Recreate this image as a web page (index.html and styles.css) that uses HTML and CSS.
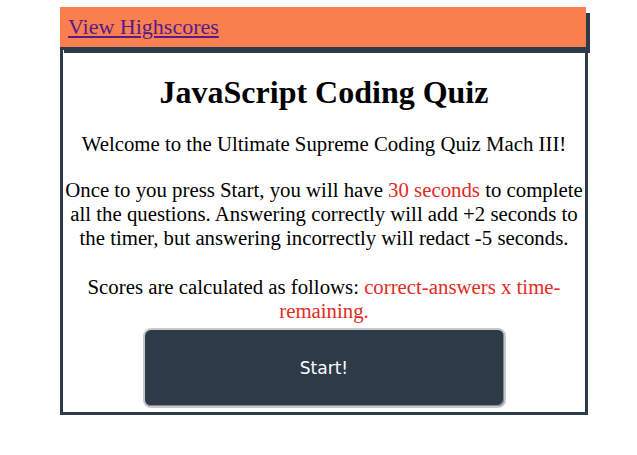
FILE: index.html
```html
<!DOCTYPE html>
<html>
<head>
<meta charset="utf-8">
<link rel="stylesheet" href="styles.css">
</head>
<body>
<div class="wrap">
  <header class="topbar"><a href="#" class="hs-link">View Highscores</a></header>
  <main class="quiz">
    <h1 class="title">JavaScript Coding Quiz</h1>
    <p class="text first">Welcome to the Ultimate Supreme Coding Quiz Mach III!</p>
    <p class="text">Once to you press Start, you will have <span class="hl">30 seconds</span> to complete all the questions. Answering correctly will add +2 seconds to the timer, but answering incorrectly will redact -5 seconds.</p>
    <p class="text tight">Scores are calculated as follows: <span class="hl">correct-answers x time-remaining.</span></p>
    <button class="start">Start!</button>
  </main>
</div>
</body>
</html>
```
FILE: styles.css
```css
html, body { margin: 0; padding: 0; background: #fff; }
body { font-family: "Liberation Serif", "Times New Roman", serif; }
.wrap { margin: 7px 0 0 60px; width: 528px; }
.topbar {
  width: 526px; height: 40px; background: #f97f4f;
  box-shadow: 4px 6px 0 #2d3a48;
  display: flex; align-items: center; box-sizing: border-box; padding-left: 8px;
  position: relative; z-index: 1;
}
.hs-link { font-size: 22px; color: #551a8b; text-decoration: underline; }
.quiz {
  border: 3px solid #2d3a48;
  margin-top: 0; padding: 0 0 4px; text-align: center;
  display: flex; flex-direction: column; align-items: center;
  box-sizing: border-box; width: 528px;
}
.title { font-size: 32px; font-weight: bold; margin: 24px 0 0; line-height: 36px; }
.text { font-size: 20.8px; line-height: 24px; margin: 22px 0 0; padding: 0; }
.text.first { margin-top: 22px; }
.hl { color: #e22b1e; }
.tight { margin-top: 25px; margin-bottom: 5px; }
.start {
  width: 363px; height: 80px; background: #2d3a48; color: #fff;
  border: 2px solid #c8c8c8; border-radius: 8px;
  font-family: "DejaVu Sans", Verdana, sans-serif; font-size: 17px;
  box-shadow: inset -1px -1px 0 #888;
}
```
